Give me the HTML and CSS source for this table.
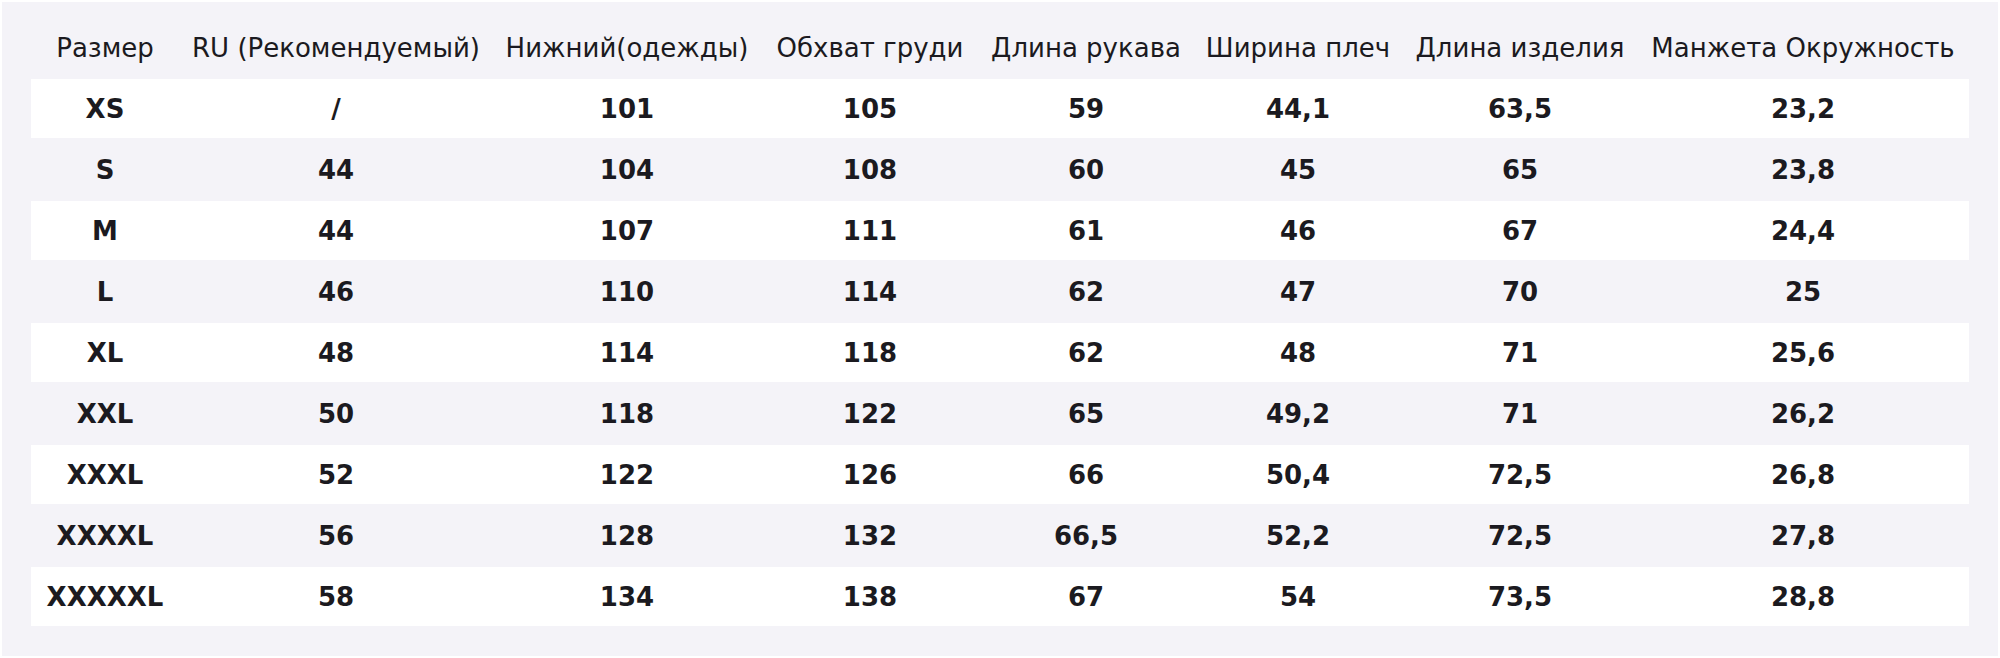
FILE: index.html
```html
<!DOCTYPE html>
<html lang="ru">
<head>
<meta charset="utf-8">
<title>Таблица размеров</title>
<link rel="stylesheet" href="styles.css">
</head>
<body>
<div class="sheet">
  <table class="sizes">
    <colgroup>
      <col class="c1"><col class="c2"><col class="c3"><col class="c4">
      <col class="c5"><col class="c6"><col class="c7"><col class="c8">
    </colgroup>
    <thead>
      <tr>
        <th>Размер</th>
        <th>RU (Рекомендуемый)</th>
        <th>Нижний(одежды)</th>
        <th>Обхват груди</th>
        <th>Длина рукава</th>
        <th>Ширина плеч</th>
        <th>Длина изделия</th>
        <th>Манжета Окружность</th>
      </tr>
    </thead>
    <tbody>
      <tr><td>XS</td><td>/</td><td>101</td><td>105</td><td>59</td><td>44,1</td><td>63,5</td><td>23,2</td></tr>
      <tr><td>S</td><td>44</td><td>104</td><td>108</td><td>60</td><td>45</td><td>65</td><td>23,8</td></tr>
      <tr><td>M</td><td>44</td><td>107</td><td>111</td><td>61</td><td>46</td><td>67</td><td>24,4</td></tr>
      <tr><td>L</td><td>46</td><td>110</td><td>114</td><td>62</td><td>47</td><td>70</td><td>25</td></tr>
      <tr><td>XL</td><td>48</td><td>114</td><td>118</td><td>62</td><td>48</td><td>71</td><td>25,6</td></tr>
      <tr><td>XXL</td><td>50</td><td>118</td><td>122</td><td>65</td><td>49,2</td><td>71</td><td>26,2</td></tr>
      <tr><td>XXXL</td><td>52</td><td>122</td><td>126</td><td>66</td><td>50,4</td><td>72,5</td><td>26,8</td></tr>
      <tr><td>XXXXL</td><td>56</td><td>128</td><td>132</td><td>66,5</td><td>52,2</td><td>72,5</td><td>27,8</td></tr>
      <tr><td>XXXXXL</td><td>58</td><td>134</td><td>138</td><td>67</td><td>54</td><td>73,5</td><td>28,8</td></tr>
    </tbody>
  </table>
</div>
</body>
</html>
```

FILE: styles.css
```css
html, body {
  background: #ffffff;
}
body {
  margin: 2px;
  font-family: "DejaVu Sans", sans-serif;
  color: #1b1a20;
}
.sheet {
  background: #f4f3f8;
  height: 654px;
  box-sizing: border-box;
  padding: 14px 29px 28px;
}
.sizes {
  width: 100%;
  table-layout: fixed;
  border-collapse: separate;
  border-spacing: 0 2px;
}
.c1 { width: 148px; }
.c2 { width: 314px; }
.c3 { width: 268px; }
.c4 { width: 218px; }
.c5 { width: 214px; }
.c6 { width: 210px; }
.c7 { width: 234px; }
.c8 { width: 332px; }
.sizes th,
.sizes td {
  height: 59px;
  padding: 0;
  text-align: center;
  vertical-align: middle;
  font-size: 26px;
  white-space: nowrap;
}
.sizes th {
  font-weight: normal;
}
.sizes td {
  font-weight: bold;
}
.sizes tbody tr:nth-child(odd) td {
  background: #ffffff;
}
```
